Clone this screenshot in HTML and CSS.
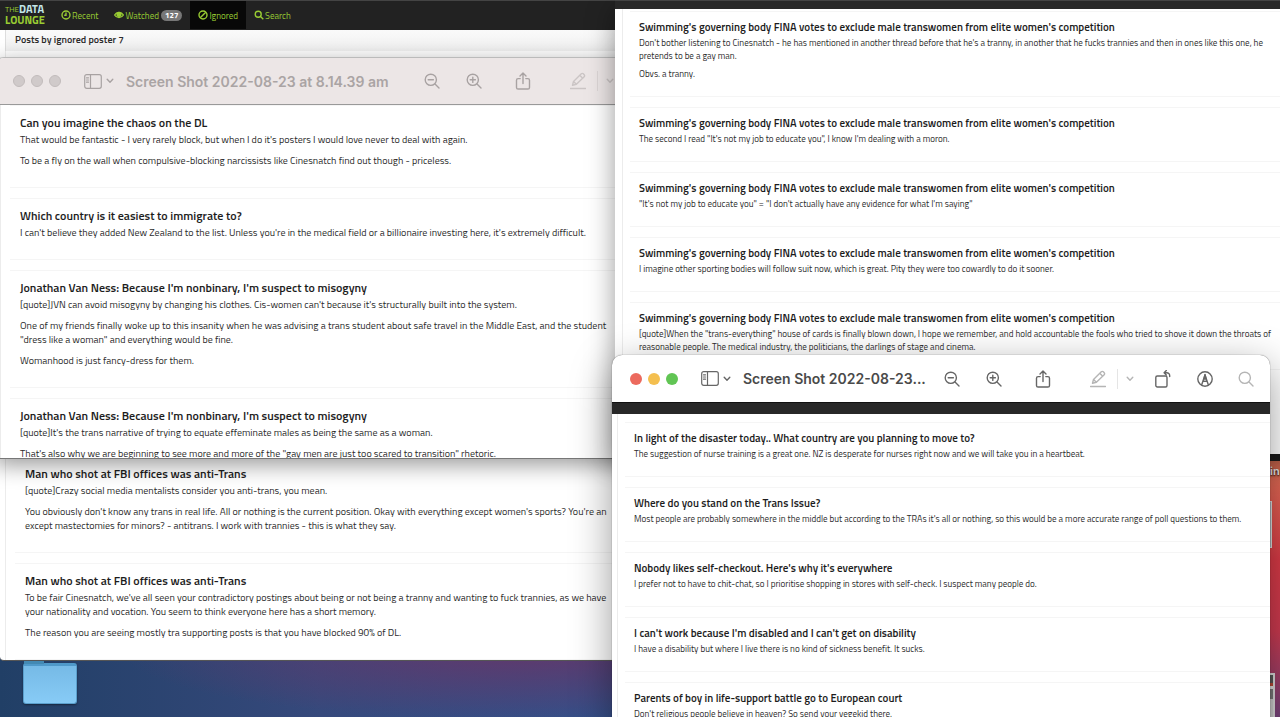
FILE: index.html
```
<!DOCTYPE html>
<html lang="en">
<head>
    <meta charset="UTF-8">
    <meta name="viewport" content="width=device-width, initial-scale=1">

    <title>Posts by ignored poster 7</title>
    <link rel="stylesheet" href="styles.css">
</head>
<body>
    <!-- shared icons -->
    <svg class="sprite" aria-hidden="true">
        <symbol id="sidebar" viewBox="0 0 18 15">
            <rect x="0.7" y="0.7" width="16.6" height="13.6" rx="2"/>
            <path d="M6.5 1v13M2.5 3.8h2M2.5 6h2M2.5 8.2h2"/>
        </symbol>
        <symbol id="chevron" viewBox="0 0 8 6">
            <path d="M1.2 1.3L4 4.2l2.8-2.9"/>
        </symbol>
        <symbol id="zoom-out" viewBox="0 0 16 16">
            <circle cx="6.8" cy="6.8" r="5.6"/>
            <path d="M11 11l4 4M4.2 6.8h5.2"/>
        </symbol>
        <symbol id="zoom-in" viewBox="0 0 16 16">
            <circle cx="6.8" cy="6.8" r="5.6"/>
            <path d="M11 11l4 4M4.2 6.8h5.2M6.8 4.2v5.2"/>
        </symbol>
        <symbol id="share" viewBox="0 0 16 18">
            <path d="M5.2 6.6H3.1a1.6 1.6 0 0 0-1.6 1.6v7.2A1.6 1.6 0 0 0 3.1 17h9.8a1.6 1.6 0 0 0 1.6-1.6V8.2a1.6 1.6 0 0 0-1.6-1.6h-2.1M8 11.5V1.2M5 4l3-2.9L11 4"/>
        </symbol>
        <symbol id="pencil" viewBox="0 0 16 18">
            <path d="M2.5 13.3l1-3.8 7.8-7.7a1.4 1.4 0 0 1 2 0l.9.9a1.4 1.4 0 0 1 0 2L6.4 12.3zM9.8 3.3l2.9 2.9M3.5 9.5l2.9 2.8M.5 16.5h15"/>
        </symbol>
        <symbol id="rotate" viewBox="0 0 16 18">
            <rect x="0.8" y="6" width="11.2" height="11" rx="1.5"/>
            <path d="M9.2 2.7h2.5a3 3 0 0 1 3 3v.8M11.3.6L9.1 2.7l2.2 2.2"/>
        </symbol>
        <symbol id="markup" viewBox="0 0 16 16">
            <circle cx="8" cy="8" r="7.2"/>
            <path d="M4.7 13.8L8 4l3.3 9.8M5.8 10.3h4.4"/>
            <path d="M8 3.5l1 4.5H7z" fill="currentColor"/>
        </symbol>
        <symbol id="search" viewBox="0 0 16 16">
            <circle cx="6.8" cy="6.8" r="5.6"/>
            <path d="M11 11l4 4"/>
        </symbol>
    </svg>

    <div class="desktop">
        <div class="folder"></div>
        <div class="strip"></div>
        <span class="file-label">in</span>
        <div class="file-thumb"></div>
        <div class="file-doc"></div>

        <!-- ignored posts in the browser -->
        <section class="window browser">
            <nav class="navbar">
                <a href="#" class="logo"><span class="the">THE</span><span class="data">DATA</span><span class="lounge">LOUNGE</span></a>
                <a href="#" class="nav-link">
                    <svg viewBox="0 0 10 10"><circle cx="5" cy="5" r="4"/><path d="M5 2.5v2.7H3.2"/></svg>Recent
                </a>
                <a href="#" class="nav-link">
                    <svg viewBox="0 0 10 10"><path d="M.6 5C2.5 1.7 7.5 1.7 9.4 5 7.5 8.3 2.5 8.3.6 5z"/><circle cx="5" cy="4.3" r="1.9" fill="currentColor"/></svg>Watched <span class="badge">127</span>
                </a>
                <a href="#" class="nav-link active">
                    <svg viewBox="0 0 10 10"><circle cx="5" cy="5" r="4"/><path d="M2.2 7.8l5.6-5.6"/></svg>Ignored
                </a>
                <a href="#" class="nav-link">
                    <svg viewBox="0 0 10 10"><circle cx="4.2" cy="4.2" r="3"/><path d="M6.5 6.5l2.8 2.8"/></svg>Search
                </a>
            </nav>
            <h1 class="page-title">Posts by ignored poster 7</h1>
            <div class="posts">
                <article class="post">
                    <h2>Man who shot at FBI offices was anti-Trans</h2>
                    <p>[quote]Crazy social media mentalists consider you anti-trans, you mean.</p>
                    <p>You obviously don't know any trans in real life. All or nothing is the current position. Okay with everything except women's sports? You're an<br>except mastectomies for minors? - antitrans. I work with trannies - this is what they say.</p>
                </article>
                <article class="post">
                    <h2>Man who shot at FBI offices was anti-Trans</h2>
                    <p>To be fair Cinesnatch, we've all seen your contradictory postings about being or not being a tranny and wanting to fuck trannies, as we have<br>your nationality and vocation. You seem to think everyone here has a short memory.</p>
                    <p>The reason you are seeing mostly tra supporting posts is that you have blocked 90% of DL.</p>
                </article>
            </div>
        </section>

        <!-- inactive preview window -->
        <section class="window preview inactive">
            <header class="toolbar">
                <div class="lights"><i></i><i></i><i></i></div>
                <button class="side" aria-label="Sidebar"><svg class="wide"><use href="#sidebar"/></svg><svg class="arrow"><use href="#chevron"/></svg></button>
                <strong class="name">Screen Shot 2022-08-23 at 8.14.39 am</strong>
                <div class="tools">
                    <button aria-label="Zoom out"><svg><use href="#zoom-out"/></svg></button>
                    <button aria-label="Zoom in"><svg><use href="#zoom-in"/></svg></button>
                    <button class="share" aria-label="Share"><svg class="tall"><use href="#share"/></svg></button>
                    <button class="pen" aria-label="Highlight"><svg class="tall"><use href="#pencil"/></svg></button>
                    <button class="more" aria-label="Highlight colour"><svg class="arrow"><use href="#chevron"/></svg></button>
                    <button aria-label="Rotate"><svg class="tall"><use href="#rotate"/></svg></button>
                    <button aria-label="Markup"><svg><use href="#markup"/></svg></button>
                    <button class="dim" aria-label="Search"><svg><use href="#search"/></svg></button>
                </div>
            </header>
            <div class="posts">
                <article class="post">
                    <h2>Can you imagine the chaos on the DL</h2>
                    <p>That would be fantastic - I very rarely block, but when I do it's posters I would love never to deal with again.</p>
                    <p>To be a fly on the wall when compulsive-blocking narcissists like Cinesnatch find out though - priceless.</p>
                </article>
                <article class="post">
                    <h2>Which country is it easiest to immigrate to?</h2>
                    <p>I can't believe they added New Zealand to the list. Unless you're in the medical field or a billionaire investing here, it's extremely difficult.</p>
                </article>
                <article class="post">
                    <h2>Jonathan Van Ness: Because I'm nonbinary, I'm suspect to misogyny</h2>
                    <p>[quote]JVN can avoid misogyny by changing his clothes. Cis-women can't because it's structurally built into the system.</p>
                    <p>One of my friends finally woke up to this insanity when he was advising a trans student about safe travel in the Middle East, and the student<br>"dress like a woman" and everything would be fine.</p>
                    <p>Womanhood is just fancy-dress for them.</p>
                </article>
                <article class="post">
                    <h2>Jonathan Van Ness: Because I'm nonbinary, I'm suspect to misogyny</h2>
                    <p>[quote]It's the trans narrative of trying to equate effeminate males as being the same as a woman.</p>
                    <p>That's also why we are beginning to see more and more of the "gay men are just too scared to transition" rhetoric.</p>
                </article>
            </div>
        </section>

        <!-- preview window cut off by the top of the screen -->
        <section class="window upper small">
            <div class="dark-edge"></div>
            <div class="posts">
                <article class="post">
                    <h2>Swimming's governing body FINA votes to exclude male transwomen from elite women's competition</h2>
                    <p>Don't bother listening to Cinesnatch - he has mentioned in another thread before that he's a tranny, in another that he fucks trannies and then in ones like this one, he<br>pretends to be a gay man.</p>
                    <p>Obvs. a tranny.</p>
                </article>
                <article class="post">
                    <h2>Swimming's governing body FINA votes to exclude male transwomen from elite women's competition</h2>
                    <p>The second I read "It's not my job to educate you", I know I'm dealing with a moron.</p>
                </article>
                <article class="post">
                    <h2>Swimming's governing body FINA votes to exclude male transwomen from elite women's competition</h2>
                    <p>"It's not my job to educate you" = "I don't actually have any evidence for what I'm saying"</p>
                </article>
                <article class="post">
                    <h2>Swimming's governing body FINA votes to exclude male transwomen from elite women's competition</h2>
                    <p>I imagine other sporting bodies will follow suit now, which is great. Pity they were too cowardly to do it sooner.</p>
                </article>
                <article class="post">
                    <h2>Swimming's governing body FINA votes to exclude male transwomen from elite women's competition</h2>
                    <p>[quote]When the "trans-everything" house of cards is finally blown down, I hope we remember, and hold accountable the fools who tried to shove it down the throats of<br>reasonable people. The medical industry, the politicians, the darlings of stage and cinema.</p>
                </article>
            </div>
        </section>

        <!-- active preview window -->
        <section class="window front small">
            <header class="toolbar">
                <div class="lights"><i></i><i></i><i></i></div>
                <button class="side" aria-label="Sidebar"><svg class="wide"><use href="#sidebar"/></svg><svg class="arrow"><use href="#chevron"/></svg></button>
                <strong class="name">Screen Shot 2022-08-23...</strong>
                <div class="tools">
                    <button aria-label="Zoom out"><svg><use href="#zoom-out"/></svg></button>
                    <button aria-label="Zoom in"><svg><use href="#zoom-in"/></svg></button>
                    <button class="share" aria-label="Share"><svg class="tall"><use href="#share"/></svg></button>
                    <button class="pen" aria-label="Highlight"><svg class="tall"><use href="#pencil"/></svg></button>
                    <button class="more" aria-label="Highlight colour"><svg class="arrow"><use href="#chevron"/></svg></button>
                    <button aria-label="Rotate"><svg class="tall"><use href="#rotate"/></svg></button>
                    <button aria-label="Markup"><svg><use href="#markup"/></svg></button>
                    <button class="dim" aria-label="Search"><svg><use href="#search"/></svg></button>
                </div>
            </header>
            <div class="dark-edge"></div>
            <div class="posts">
                <article class="post">
                    <h2>In light of the disaster today.. What country are you planning to move to?</h2>
                    <p>The suggestion of nurse training is a great one. NZ is desperate for nurses right now and we will take you in a heartbeat.</p>
                </article>
                <article class="post">
                    <h2>Where do you stand on the Trans Issue?</h2>
                    <p>Most people are probably somewhere in the middle but according to the TRAs it's all or nothing, so this would be a more accurate range of poll questions to them.</p>
                </article>
                <article class="post">
                    <h2>Nobody likes self-checkout. Here's why it's everywhere</h2>
                    <p>I prefer not to have to chit-chat, so I prioritise shopping in stores with self-check. I suspect many people do.</p>
                </article>
                <article class="post">
                    <h2>I can't work because I'm disabled and I can't get on disability</h2>
                    <p>I have a disability but where I live there is no kind of sickness benefit. It sucks.</p>
                </article>
                <article class="post">
                    <h2>Parents of boy in life-support battle go to European court</h2>
                    <p>Don't religious people believe in heaven? So send your vegekid there.</p>
                </article>
            </div>
        </section>
    </div>
</body>
</html>
```
FILE: styles.css
```
* {
    box-sizing: border-box;
}
body {
    margin: 0;
    font-family: "Titillium Web", Roboto, sans-serif;
    color: #2c2c2c;
}
.sprite {
    position: absolute;
    width: 0;
    height: 0;
}
.desktop {
    position: relative;
    height: 100vh;
    overflow: hidden;
    background:
        linear-gradient(180deg, #e8785a 64%, #d93a46 78%, #cc3a50 88%, #75437a 100%) right / 20px 100% no-repeat,
        radial-gradient(ellipse 400px 70px at 520px 650px, #61386b, transparent),
        linear-gradient(90deg, #213f66, #36497c 25%, #35508a 48%);
}

/* desktop items */
.folder {
    position: absolute;
    left: 23px;
    top: 663px;
    width: 54px;
    height: 41px;
    border: 1px solid #5b9fcc;
    border-top: 3px solid #4f99c9;
    border-radius: 3px;
    background: linear-gradient(#76bae6, #87cbf6);
    box-shadow: 0 1px 2px rgba(0, 0, 0, 0.4);
}
.folder::before {
    content: "";
    position: absolute;
    left: 0;
    top: -6px;
    width: 20px;
    height: 4px;
    background: #4389b3;
}
.strip {
    position: absolute;
    right: 0;
    top: 454px;
    width: 20px;
    height: 7px;
    background: #222;
}
.file-label {
    position: absolute;
    left: 1270px;
    top: 464px;
    font: 600 11px/14px Inter, sans-serif;
    color: #fff;
    text-shadow: 0 1px 2px #000;
}
.file-thumb {
    position: absolute;
    left: 1260px;
    top: 501px;
    width: 12px;
    height: 47px;
    background: #aab3b8;
    border: 1px solid #ddd;
}
.file-doc {
    position: absolute;
    left: 1260px;
    top: 673px;
    width: 15px;
    height: 60px;
    border: 2px solid #d8d8d8;
    background: linear-gradient(#555 8px, #b54a38 8px 11px, #ddd 11px 14px, #777 14px 24px, #c8c8c8 24px);
}

/* windows */
.window {
    position: absolute;
    display: flex;
    flex-direction: column;
    overflow: hidden;
    background: #fff;
}
.browser {
    left: 0;
    top: 0;
    width: 700px;
    height: 661px;
    border-bottom-left-radius: 4px;
    border-bottom: 1px solid #555;
}
.preview {
    left: -6px;
    top: 57px;
    width: 757px;
    height: 402px;
    border: 1px solid #bbb;
    border-bottom-color: #777;
    border-radius: 10px 10px 4px 4px;
    box-shadow: 0 6px 22px rgba(0, 0, 0, 0.4);
}
.upper {
    left: 615px;
    right: -60px;
    top: 0;
    height: 454px;
    box-shadow: 0 8px 26px rgba(0, 0, 0, 0.4);
}
.front {
    left: 612px;
    right: 10px;
    top: 355px;
    bottom: -40px;
    border-radius: 10px;
    box-shadow: 0 0 1px rgba(0, 0, 0, 0.7), 0 12px 40px rgba(0, 0, 0, 0.4);
}

/* site header */
.navbar {
    display: flex;
    height: 30px;
    flex: none;
    background: #222;
    border-top: 1px solid #444;
    font-size: 9px;
}
.navbar a {
    color: #9c3;
    text-decoration: none;
}
.logo {
    display: grid;
    grid-template-columns: 14px 26px;
    grid-template-rows: 11px 11px;
    margin: 3px 8px 0 5px;
    font-weight: bold;
    font-size: 11px;
    line-height: 11px;
}
.logo .the {
    font-size: 8px;
    font-weight: normal;
}
.logo .data {
    color: #c3e6e8;
}
.logo .lounge {
    grid-column: 1 / 3;
}
.nav-link {
    display: flex;
    align-items: center;
    gap: 1px;
    padding: 0 8px;
    height: 28px;
}
.nav-link.active {
    background: #080808;
}
.nav-link svg {
    width: 10px;
    height: 10px;
    fill: none;
    stroke: currentColor;
    stroke-width: 1.4;
}
.badge {
    margin-left: 1px;
    padding: 0 4px;
    border-radius: 6px;
    background: #777;
    color: #fff;
    font-size: 8px;
    font-weight: bold;
    line-height: 11px;
}
.page-title {
    flex: none;
    margin: 0 0 0 5px;
    padding: 0 9px;
    height: 21px;
    border-left: 1px solid #ddd;
    background: linear-gradient(#fafafa, #f0f0f0);
    font-size: 10px;
    font-weight: 600;
    line-height: 20px;
}

/* preview toolbar */
.toolbar {
    display: flex;
    flex: none;
    align-items: center;
    height: 47px;
    padding: 0 16px 0 18px;
    color: #666;
    font-family: Inter, sans-serif;
}
.lights {
    display: flex;
    gap: 6px;
}
.lights i {
    width: 12px;
    height: 12px;
    border-radius: 50%;
    background: #ec6a5e;
}
.lights i:nth-child(2) {
    background: #f4bf4f;
}
.lights i:nth-child(3) {
    background: #61c554;
}
.toolbar button {
    display: flex;
    align-items: center;
    padding: 0;
    border: 0;
    background: none;
    color: inherit;
}
.toolbar svg {
    width: 16px;
    height: 16px;
    fill: none;
    stroke: currentColor;
    stroke-width: 1.4;
    stroke-linecap: round;
    stroke-linejoin: round;
}
.toolbar .wide {
    width: 18px;
    height: 15px;
    stroke-width: 1.2;
}
.toolbar .tall {
    height: 18px;
}
.toolbar .arrow {
    width: 8px;
    height: 6px;
}
.toolbar .side {
    gap: 4px;
    margin: 0 12px 0 23px;
}
.name {
    flex: 1;
    color: #4a4a4a;
    font-size: 14px;
    font-weight: 600;
    white-space: nowrap;
}
.tools {
    display: flex;
    align-items: center;
    gap: 26px;
}
.toolbar .share {
    margin: 0 13px 0 7px;
}
.toolbar .pen,
.toolbar .more,
.toolbar .dim {
    color: #b5b5b5;
}
.toolbar .more {
    height: 20px;
    margin: 0 -5px 0 -15px;
    padding-left: 8px;
    border-left: 1px solid #e5e5e5;
}
.toolbar .dim {
    margin-left: -1px;
}
.inactive .toolbar {
    background: #ece6e6;
    border-bottom: 1px solid #999;
    color: #a8a2a2;
}
.inactive .lights i,
.inactive .lights i:nth-child(n) {
    background: #d0caca;
    border: 1px solid #c2bcbc;
}
.inactive .name {
    color: #aaa4a4;
}
.inactive .pen,
.inactive .more {
    color: #cbc5c5;
}
.inactive .more {
    border-color: #dcd6d6;
}
.dark-edge {
    flex: none;
    height: 9px;
    background: #282828;
    border-top: 1px solid #444;
}
.front .dark-edge {
    height: 12px;
    border-color: #111;
}

/* posts */
.posts {
    flex: 1;
    display: flex;
    flex-direction: column;
    gap: 10px;
    margin-left: 5px;
    padding-left: 9px;
    border-left: 1px solid #ececec;
    white-space: nowrap;
}
.browser .posts {
    justify-content: flex-end;
}
.post {
    padding: 7px 10px 19px;
    border-top: 1px solid #f5f5f5;
    border-bottom: 1px solid #f5f5f5;
}
.post h2 {
    margin: 0;
    color: #1c1c1c;
    font-size: 12px;
    font-weight: 600;
    line-height: 20px;
}
.post p {
    margin: 0;
    font-size: 10px;
    line-height: 14px;
}
.post p + p {
    margin-top: 7px;
}
.small .posts {
    padding-top: 8px;
    padding-left: 7px;
}
.upper .posts {
    margin-left: 7px;
    padding-top: 2px;
}
.small .post {
    padding: 6px 9px 16px;
}
.small .post h2 {
    font-size: 11px;
    line-height: 18px;
}
.small .post p {
    font-size: 9px;
    line-height: 13px;
}
.small .post p + p {
    margin-top: 5px;
}
```
